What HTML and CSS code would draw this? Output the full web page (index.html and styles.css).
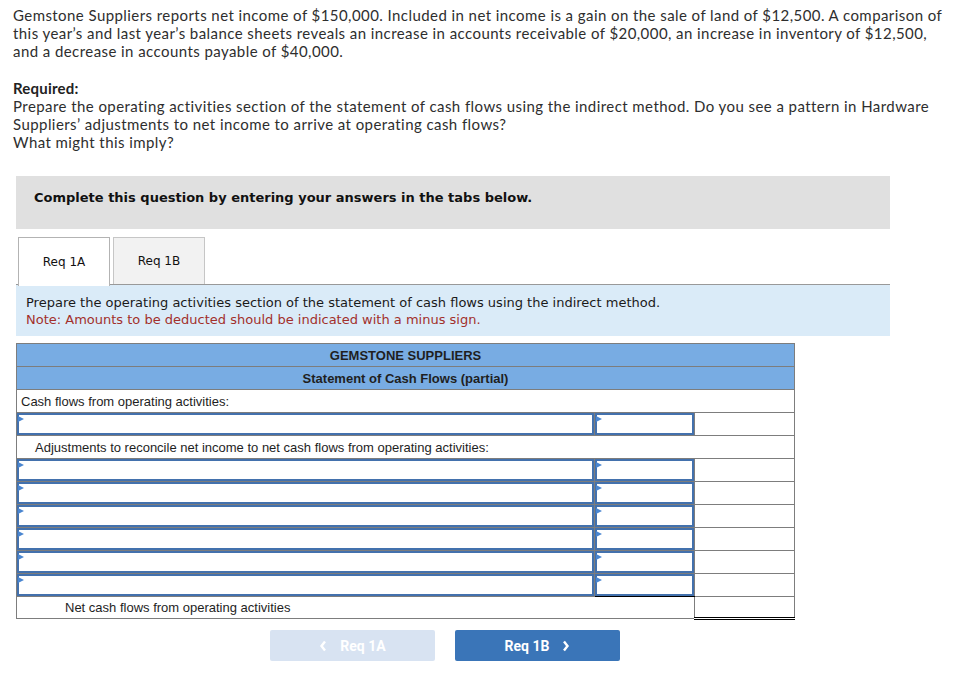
FILE: index.html
```html
<!DOCTYPE html>
<html>
<head>
<meta charset="utf-8">
<link rel="stylesheet" href="styles.css">
</head>
<body>
<div class="intro">
  <p class="para">Gemstone Suppliers reports net income of $150,000. Included in net income is a gain on the sale of land of $12,500. A comparison of<br>this year’s and last year’s balance sheets reveals an increase in accounts receivable of $20,000, an increase in inventory of $12,500,<br>and a decrease in accounts payable of $40,000.</p>
  <p class="para req"><b>Required:</b><br>Prepare the operating activities section of the statement of cash flows using the indirect method. Do you see a pattern in Hardware<br>Suppliers’ adjustments to net income to arrive at operating cash flows?<br>What might this imply?</p>
</div>
<div class="question">
  <div class="banner">Complete this question by entering your answers in the tabs below.</div>
  <div class="tabs">
    <div class="tab active">Req 1A</div>
    <div class="tab">Req 1B</div>
  </div>
  <div class="instr">
    <div>Prepare the operating activities section of the statement of cash flows using the indirect method.</div>
    <div class="note">Note: Amounts to be deducted should be indicated with a minus sign.</div>
  </div>
</div>
<table class="sheet">
  <colgroup><col class="c1"><col class="c2"><col class="c3"></colgroup>
  <tr class="hd"><td colspan="3" class="co">GEMSTONE SUPPLIERS</td></tr>
  <tr class="hd"><td colspan="3" class="sub">Statement of Cash Flows (partial)</td></tr>
  <tr><td colspan="3" class="lbl">Cash flows from operating activities:</td></tr>
  <tr><td class="inp"><div class="box"><span class="tri"></span></div></td><td class="inp"><div class="box"><span class="tri"></span></div></td><td></td></tr>
  <tr><td colspan="3" class="lbl ind1">Adjustments to reconcile net income to net cash flows from operating activities:</td></tr>
  <tr><td class="inp"><div class="box"><span class="tri"></span></div></td><td class="inp"><div class="box"><span class="tri"></span></div></td><td></td></tr>
  <tr><td class="inp"><div class="box"><span class="tri"></span></div></td><td class="inp"><div class="box"><span class="tri"></span></div></td><td></td></tr>
  <tr><td class="inp"><div class="box"><span class="tri"></span></div></td><td class="inp"><div class="box"><span class="tri"></span></div></td><td></td></tr>
  <tr><td class="inp"><div class="box"><span class="tri"></span></div></td><td class="inp"><div class="box"><span class="tri"></span></div></td><td></td></tr>
  <tr><td class="inp"><div class="box"><span class="tri"></span></div></td><td class="inp"><div class="box"><span class="tri"></span></div></td><td></td></tr>
  <tr><td class="inp"><div class="box"><span class="tri"></span></div></td><td class="inp total-above"><div class="box"><span class="tri"></span></div></td><td></td></tr>
  <tr class="last"><td colspan="2" class="lbl ind2">Net cash flows from operating activities</td><td class="grand"></td></tr>
</table>
<div class="nav">
  <div class="btn disabled"><svg width="8" height="12" viewBox="0 0 8 12"><polyline points="6,1.5 2.5,6 6,10.5" fill="none" stroke="#fff" stroke-width="2.4"/></svg><span>Req 1A</span></div>
  <div class="btn primary"><span>Req 1B</span><svg width="8" height="12" viewBox="0 0 8 12"><polyline points="2,1.5 5.5,6 2,10.5" fill="none" stroke="#fff" stroke-width="2.4"/></svg></div>
</div>
</body>
</html>
```
FILE: styles.css
```css
html, body { margin: 0; padding: 0; background: #fff; }
body { width: 970px; }
.intro { padding: 6px 0 0 13px; font-family: Lato, "Open Sans", sans-serif; font-size: 15px; line-height: 18px; color: #2e2e2e; letter-spacing: 0.43px; }
.para { margin: 0; white-space: nowrap; }
.req { margin-top: 19px; }
.req b { font-weight: bold; color: #222; letter-spacing: 0.2px; }
.question { margin: 25px 0 0 16px; width: 874px; font-family: "DejaVu Sans", Verdana, sans-serif; }
.banner { background: #e0e0e0; padding: 14px 18px 23px; font-size: 13px; line-height: 16px; font-weight: bold; color: #111; }
.tabs { display: flex; gap: 3px; margin: 8px 0 0 2px; height: 47px; }
.tab { width: 90px; height: 46px; border: 1px solid #c6c6c6; border-bottom: none; background: #f2f2f2; display: flex; align-items: center; justify-content: center; font-size: 12px; color: #111; }
.tab.active { background: #fff; border-color: #b3b3b3; height: 48px; position: relative; z-index: 1; }
.instr { background: #daebf8; border-top: 1px solid #999; padding: 9px 10px 8px; font-size: 13px; line-height: 17px; color: #1a1a1a; }
.note { color: #a2302b; }
.sheet { margin: 7px 0 0 16px; border-collapse: collapse; table-layout: fixed; width: 778px; font-family: "Liberation Sans", Arial, sans-serif; font-size: 13px; color: #1e1e1e; }
.sheet col.c1 { width: 578px; }
.sheet col.c2 { width: 100px; }
.sheet col.c3 { width: 100px; }
.sheet td { border: 1px solid #7d7d7d; height: 22px; padding: 0; }
.sheet tr.hd td { background: #78ace3; text-align: center; font-size: 13px; color: #1f1f1f; font-weight: bold; }
.sheet td.lbl { padding-left: 4px; }
.sheet td.ind1 { padding-left: 18px; }
.sheet td.ind2 { padding-left: 48px; }
.sheet tr.last td { height: 20px; }
.sheet td.inp { position: relative; }
.box { position: relative; height: 22px; box-sizing: border-box; border: 2px solid #4371ad; }
.tri { position: absolute; top: 1px; left: -1px; width: 0; height: 0; border-left: 6px solid #4a86d0; border-top: 3.5px solid transparent; border-bottom: 3.5px solid transparent; }
.sheet td.total-above { border-bottom: 1px solid #000; }
.sheet td.grand { border-top: 1px solid #000; border-bottom: 3px double #000; }
.nav { display: flex; gap: 20px; margin: 10px 0 0 270px; }
.btn { width: 165px; height: 31px; border-radius: 2px; display: flex; align-items: center; justify-content: center; gap: 13px; font-family: Roboto, "Liberation Sans", sans-serif; font-weight: bold; font-size: 14px; color: #fff; }
.btn.disabled { background: #d8e3f2; }
.btn.primary { background: #3a75b8; }
```
